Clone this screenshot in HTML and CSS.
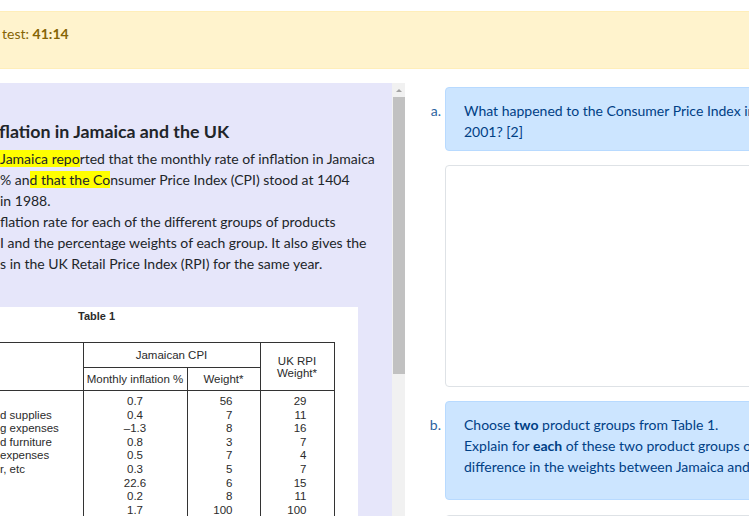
FILE: index.html
```html
<!DOCTYPE html>
<html lang="en">
<head>
<meta charset="utf-8">
<title>Test</title>
<link rel="stylesheet" href="styles.css">
</head>
<body>
<div class="timer">test: <strong>41:14</strong></div>
<div class="main">
  <section class="source">
    <div class="source-body">
      <h2 class="title">flation in Jamaica and the UK</h2>
      <p class="intro"><mark>Jamaica repo</mark>rted that the monthly rate of inflation in Jamaica<br>% an<mark>d that the Co</mark>nsumer Price Index (CPI) stood at 1404<br>in 1988.<br>flation rate for each of the different groups of products<br>I and the percentage weights of each group. It also gives the<br>s in the UK Retail Price Index (RPI) for the same year.</p>
      <div class="figure">
        <div class="caption">Table 1</div>
        <table class="t1">
          <colgroup><col class="w0"><col class="w1"><col class="w2"><col class="w3"></colgroup>
          <thead>
            <tr><th class="c0" rowspan="2"></th><th class="cpi" colspan="2">Jamaican CPI</th><th class="uk" rowspan="2">UK RPI<br>Weight*</th></tr>
            <tr><th class="sub">Monthly inflation %</th><th class="sub">Weight*</th></tr>
          </thead>
          <tbody>
            <tr class="first"><td class="lab"></td><td class="n1">0.7</td><td class="n2">56</td><td class="n3">29</td></tr>
            <tr><td class="lab">d supplies</td><td class="n1">0.4</td><td class="n2">7</td><td class="n3">11</td></tr>
            <tr><td class="lab">g expenses</td><td class="n1">–1.3</td><td class="n2">8</td><td class="n3">16</td></tr>
            <tr><td class="lab">d furniture</td><td class="n1">0.8</td><td class="n2">3</td><td class="n3">7</td></tr>
            <tr><td class="lab">expenses</td><td class="n1">0.5</td><td class="n2">7</td><td class="n3">4</td></tr>
            <tr><td class="lab">r, etc</td><td class="n1">0.3</td><td class="n2">5</td><td class="n3">7</td></tr>
            <tr><td class="lab"></td><td class="n1">22.6</td><td class="n2">6</td><td class="n3">15</td></tr>
            <tr><td class="lab"></td><td class="n1">0.2</td><td class="n2">8</td><td class="n3">11</td></tr>
            <tr><td class="lab"></td><td class="n1">1.7</td><td class="n2">100</td><td class="n3">100</td></tr>
          </tbody>
        </table>
      </div>
    </div>
    <div class="scrollbar">
      <div class="arrow"><span class="tri"></span></div>
      <div class="thumb"></div>
    </div>
  </section>
  <section class="questions">
    <div class="q">
      <span class="qlabel">a.</span>
      <div class="qbody">
        <div class="qtext">What happened to the Consumer Price Index in Jamaica between 1988 and<br>2001? [2]</div>
        <div class="answer"></div>
      </div>
    </div>
    <div class="q">
      <span class="qlabel">b.</span>
      <div class="qbody">
        <div class="qtext qtext-b">Choose <strong>two</strong> product groups from Table 1.<br>Explain for <strong>each</strong> of these two product groups one reason for the<br>difference in the weights between Jamaica and the UK. [6]</div>
        <div class="answer answer-b"></div>
      </div>
    </div>
  </section>
</div>
</body>
</html>
```

FILE: styles.css
```css
html, body {
  margin: 0;
  padding: 0;
  background: #ffffff;
  overflow: hidden;
}
body {
  font-family: Lato, "Open Sans", sans-serif;
  font-size: 14px;
  line-height: 21px;
  color: #212529;
  width: 749px;
  height: 516px;
}
.timer {
  margin-top: 11px;
  height: 58px;
  box-sizing: border-box;
  padding: 11px 0 0 2px;
  background: #fff3cd;
  border-top: 1px solid #ffeeba;
  border-bottom: 1px solid #ffeeba;
  color: #856404;
  width: 1100px;
}
.timer strong { font-weight: 700; }
.main {
  margin-top: 14px;
  display: flex;
  width: 1100px;
  height: 440px;
}
.source {
  flex: none;
  width: 405px;
  display: flex;
}
.source-body {
  width: 392px;
  background: #e6e6fa;
  white-space: nowrap;
  overflow: hidden;
}
.title {
  margin: 36px 0 0 -1px;
  font-size: 17.8px;
  line-height: 24px;
  font-weight: 700;
  color: #212529;
}
.intro {
  margin: 5px 0 0 0;
}
mark {
  background: #ffff00;
  color: inherit;
  padding: 0;
}
.figure {
  margin-top: 33px;
  width: 358px;
  background: #ffffff;
  padding-top: 3px;
  height: 300px;
  font-family: "Liberation Sans", Arial, sans-serif;
  color: #2b2b2b;
  font-size: 11.5px;
}
.caption {
  padding-left: 78px;
  font-weight: 700;
  font-size: 11px;
  line-height: 13px;
  height: 14px;
}
.t1 {
  margin-top: 18px;
  border-collapse: collapse;
  table-layout: fixed;
  width: 334px;
}
.w0 { width: 83px; }
.w1 { width: 104px; }
.w2 { width: 73px; }
.w3 { width: 74px; }
.t1 th {
  font-weight: 400;
  border: 1px solid #333;
  padding: 0;
  line-height: 12px;
  text-align: center;
}
.t1 th.c0 { border-left: none; }
.t1 th.cpi { height: 24px; }
.t1 th.sub { height: 22px; }
.t1 td {
  padding: 0;
  line-height: 13.6px;
  height: 13.6px;
  border-left: 1px solid #333;
  border-right: 1px solid #333;
}
.t1 td.lab { border-left: none; text-align: left; }
.t1 tr.first td { padding-top: 4px; }
.t1 td.n1 { text-align: center; }
.t1 td.n2 { text-align: right; padding-right: 27px; }
.t1 td.n3 { text-align: right; padding-right: 27px; }
.scrollbar {
  width: 13px;
  background: #f1f1f1;
  display: flex;
  flex-direction: column;
}
.arrow {
  height: 14px;
  display: flex;
  align-items: center;
  justify-content: center;
}
.tri {
  width: 0;
  height: 0;
  border-left: 3px solid transparent;
  border-right: 3px solid transparent;
  border-bottom: 3px solid #a3a3a3;
}
.thumb {
  margin-left: 1px;
  height: 277px;
  background: #c1c1c1;
}
.questions {
  flex: none;
  width: 600px;
}
.q {
  display: grid;
  grid-template-columns: 40px 500px;
}
.qlabel {
  text-align: right;
  padding-right: 4px;
  padding-top: 17px;
  color: #2c63a0;
}
.qtext {
  margin-top: 4px;
  padding: 12px 18px 8px;
  background: #cce5ff;
  border: 1px solid #b8daff;
  border-radius: 4px;
  color: #004085;
  white-space: nowrap;
}
.qtext strong { font-weight: 700; }
.qtext-b { padding-bottom: 22px; }
.answer {
  margin-top: 14px;
  height: 220px;
  border: 1px solid #dee2e6;
  border-radius: 4px;
  background: #fff;
}
.answer-b { margin-top: 15px; }
.q + .q { margin-top: 10px; }
```
